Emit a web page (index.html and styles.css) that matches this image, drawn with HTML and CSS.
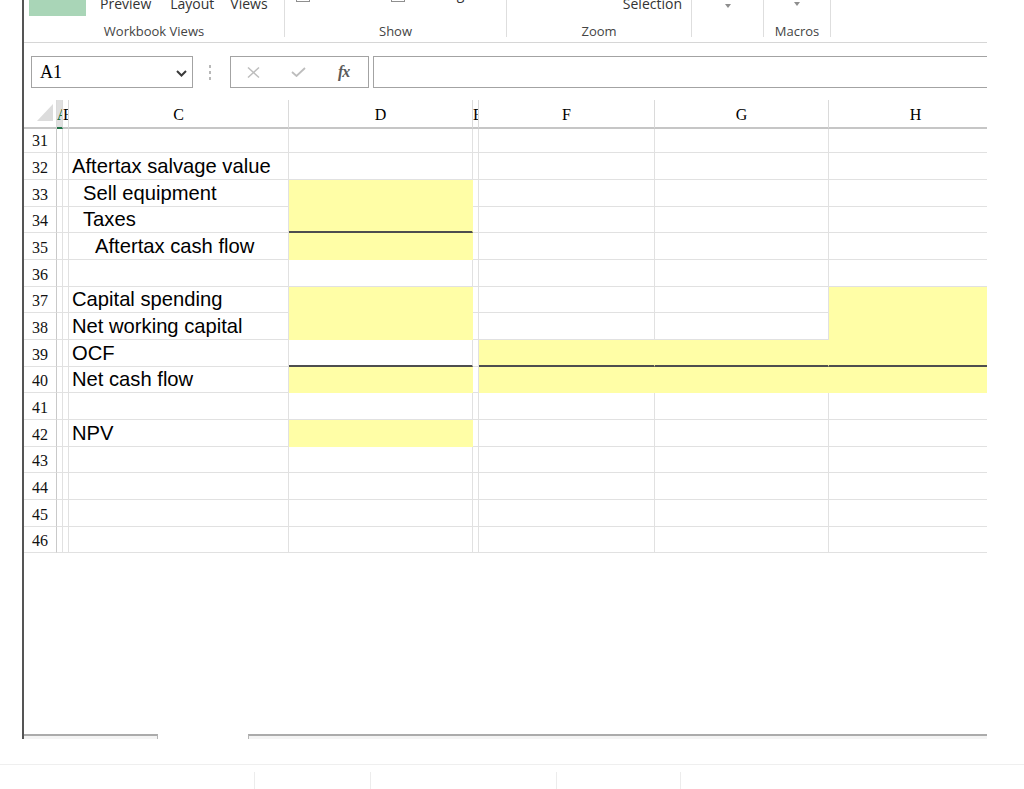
FILE: index.html
```html
<!DOCTYPE html>
<html>
<head>
    <title>Workbook - View</title>
    <link rel="stylesheet" href="styles.css">
</head>
<body>
<div class="frame">
    <div class="ribbon">
        <div class="group g-views">
            <div class="top">
                <span class="thumb"></span>
                <span class="cmd preview">Preview</span>
                <span class="cmd layout">Layout</span>
                <span class="cmd views">Views</span>
            </div>
            <div class="label">Workbook Views</div>
        </div>
        <div class="group g-show">
            <div class="top show-row">
                <span class="check first"></span>
                <span class="check-text">Gridlines</span>
                <span class="check second"></span>
                <span class="check-text">Headings</span>
            </div>
            <div class="label">Show</div>
        </div>
        <div class="group g-zoom">
            <div class="top zoom-row">
                <span class="cmd">Selection</span>
            </div>
            <div class="label">Zoom</div>
        </div>
        <div class="group g-window">
            <div class="drop"></div>
        </div>
        <div class="group g-macros">
            <div class="drop high"></div>
            <div class="label">Macros</div>
        </div>
    </div>

    <div class="formula">
        <div class="namebox">
            <span class="ref">A1</span>
            <svg class="chev" width="11" height="7" viewBox="0 0 11 7">
                <polyline points="1,1 5.5,5.5 10,1" fill="none" stroke="#3a3a3a" stroke-width="2"/>
            </svg>
        </div>
        <div class="dots"><span></span><span></span><span></span></div>
        <div class="fx-box">
            <svg class="cancel" width="13" height="11" viewBox="0 0 13 11">
                <line x1="1" y1="0.5" x2="12" y2="10.5" stroke="#bdbdbd" stroke-width="1.4"/>
                <line x1="12" y1="0.5" x2="1" y2="10.5" stroke="#bdbdbd" stroke-width="1.4"/>
            </svg>
            <svg class="enter" width="15" height="10" viewBox="0 0 15 10">
                <polyline points="1,5 5.5,9 14,1" fill="none" stroke="#bdbdbd" stroke-width="1.8"/>
            </svg>
            <span class="fx">fx</span>
        </div>
        <div class="input"></div>
    </div>

    <div class="sheet">
        <table class="grid">
            <colgroup>
                <col class="c-rh"><col class="c-n"><col class="c-n"><col class="c-c"><col class="c-d">
                <col class="c-n"><col class="c-f"><col class="c-g"><col class="c-h">
            </colgroup>
            <thead>
                <tr class="hdr">
                    <th class="corner">
                        <svg width="32" height="26" viewBox="0 0 32 26"><polygon points="29,3 29,20 13,20" fill="#dcdcdc"/></svg>
                    </th>
                    <th class="narrow sel">A</th>
                    <th class="narrow">B</th>
                    <th>C</th>
                    <th>D</th>
                    <th class="narrow">E</th>
                    <th>F</th>
                    <th>G</th>
                    <th>H</th>
                </tr>
            </thead>
            <tbody>
                <tr class="first"><th>31</th><td></td><td></td><td></td><td></td><td></td><td></td><td></td><td></td></tr>
                <tr><th>32</th><td></td><td></td><td class="txt">Aftertax salvage value</td><td></td><td></td><td></td><td></td><td></td></tr>
                <tr><th>33</th><td></td><td></td><td class="txt i1">Sell equipment</td><td class="y"></td><td></td><td></td><td></td><td></td></tr>
                <tr><th>34</th><td></td><td></td><td class="txt i1">Taxes</td><td class="y rule"></td><td></td><td></td><td></td><td></td></tr>
                <tr><th>35</th><td></td><td></td><td class="txt i2">Aftertax cash flow</td><td class="y"></td><td></td><td></td><td></td><td></td></tr>
                <tr><th>36</th><td></td><td></td><td></td><td></td><td></td><td></td><td></td><td></td></tr>
                <tr><th>37</th><td></td><td></td><td class="txt">Capital spending</td><td class="y"></td><td></td><td></td><td></td><td class="y"></td></tr>
                <tr><th>38</th><td></td><td></td><td class="txt">Net working capital</td><td class="y"></td><td></td><td></td><td></td><td class="y"></td></tr>
                <tr><th>39</th><td></td><td></td><td class="txt">OCF</td><td class="rule"></td><td></td><td class="y rule"></td><td class="y rule"></td><td class="y rule"></td></tr>
                <tr><th>40</th><td></td><td></td><td class="txt">Net cash flow</td><td class="y"></td><td></td><td class="y"></td><td class="y"></td><td class="y"></td></tr>
                <tr><th>41</th><td></td><td></td><td></td><td></td><td></td><td></td><td></td><td></td></tr>
                <tr><th>42</th><td></td><td></td><td class="txt">NPV</td><td class="y"></td><td></td><td></td><td></td><td></td></tr>
                <tr><th>43</th><td></td><td></td><td></td><td></td><td></td><td></td><td></td><td></td></tr>
                <tr><th>44</th><td></td><td></td><td></td><td></td><td></td><td></td><td></td><td></td></tr>
                <tr><th>45</th><td></td><td></td><td></td><td></td><td></td><td></td><td></td><td></td></tr>
                <tr><th>46</th><td></td><td></td><td></td><td></td><td></td><td></td><td></td><td></td></tr>
            </tbody>
        </table>
    </div>

    <div class="tabs">
        <div class="tab-a"></div>
        <div class="tab-b"></div>
    </div>
</div>

<div class="status">
    <div class="cells">
        <div class="cell s1"></div>
        <div class="cell s2"></div>
        <div class="cell s3"></div>
        <div class="cell s4"></div>
    </div>
</div>
</body>
</html>
```

FILE: styles.css
```css
body {
    margin: 0;
    height: 789px;
    overflow: hidden;
    background: #fff;
    font-family: "Open Sans", sans-serif;
}
.frame {
    margin-left: 22px;
    width: 963px;
    height: 739px;
    border-left: 2px solid #555;
    display: flex;
    flex-direction: column;
}

/* ribbon */
.ribbon {
    display: flex;
    align-items: flex-start;
    height: 42px;
    border-bottom: 1px solid #d6d6d6;
}
.group {
    height: 37px;
    box-sizing: border-box;
    border-right: 1px solid #dedede;
    display: flex;
    flex-direction: column;
}
.g-views { width: 261px; }
.g-show { width: 222px; }
.g-zoom { width: 185px; }
.g-window { width: 72px; }
.g-macros { width: 67px; }
.top {
    display: flex;
    height: 16px;
    font-size: 14px;
    color: #333;
}
.cmd {
    line-height: 16px;
    margin-top: -4.5px;
    white-space: nowrap;
}
.thumb {
    width: 57px;
    height: 16px;
    margin-left: 5px;
    background: #a9d5b7;
}
.preview { margin-left: 14px; }
.layout { margin-left: 19px; }
.views { margin-left: 16px; }
.label {
    margin-top: auto;
    margin-bottom: -1px;
    font-size: 13px;
    line-height: 14px;
    color: #444;
    text-align: center;
}
.show-row {
    margin-top: -14px;
}
.check {
    width: 14px;
    height: 14px;
    box-sizing: border-box;
    border: 1px solid #8f8f8f;
    background: #fff;
    margin-top: 2px;
}
.check.first { margin-left: 11px; }
.check.second { margin-left: 18px; }
.check-text {
    line-height: 16px;
    margin-left: 5px;
}
.zoom-row {
    justify-content: flex-end;
    padding-right: 9px;
}
.drop {
    width: 0;
    height: 0;
    border-left: 3.5px solid transparent;
    border-right: 3.5px solid transparent;
    border-top: 4px solid #8e8e8e;
    margin: 4px auto 0;
}
.drop.high { margin-top: 2px; }

/* formula bar */
.formula {
    display: flex;
    height: 32px;
    margin-top: 13px;
}
.namebox {
    width: 162px;
    margin-left: 7px;
    box-sizing: border-box;
    border: 1px solid #a3a3a3;
    display: flex;
    align-items: center;
    padding: 0 5px 0 8px;
    font-family: "Liberation Serif", serif;
    font-size: 18px;
    color: #000;
}
.namebox .ref { flex: 1; }
.chev { margin-top: 3px; }
.dots {
    margin-left: 15px;
    width: 4px;
    display: flex;
    flex-direction: column;
    align-items: center;
    justify-content: center;
    gap: 3px;
}
.dots span {
    width: 2px;
    height: 3px;
    background: #b8b8b8;
}
.fx-box {
    width: 139px;
    margin-left: 18px;
    box-sizing: border-box;
    border: 1px solid #a3a3a3;
    display: flex;
    align-items: center;
    padding-left: 16px;
}
.enter { margin-left: 31px; }
.fx {
    margin-left: 32px;
    font-family: "Liberation Serif", serif;
    font-style: italic;
    font-weight: bold;
    font-size: 16px;
    color: #5a5a5a;
    letter-spacing: -1px;
}
.input {
    flex: 1;
    margin-left: 4px;
    border: 1px solid #a3a3a3;
    border-right: none;
}

/* sheet */
.sheet {
    margin-top: 12px;
    overflow: hidden;
}
.grid {
    table-layout: fixed;
    border-collapse: separate;
    border-spacing: 0;
    width: 979px;
    font-family: "Liberation Sans", Arial, sans-serif;
}
.c-rh { width: 33px; }
.c-n { width: 6px; }
.c-c { width: 220px; }
.c-d { width: 184px; }
.c-f { width: 176px; }
.c-g { width: 174px; }
.c-h { width: 174px; }
.grid tr { height: 26.667px; }
.grid tr.hdr { height: 28.667px; }
.grid tr.first { height: 24.667px; }
.grid td, .grid th {
    padding: 0;
    border-right: 1px solid #e1e1e1;
    border-bottom: 1px solid #e1e1e1;
    overflow: hidden;
    white-space: nowrap;
    vertical-align: bottom;
}
.grid thead th {
    font-family: "Liberation Serif", serif;
    font-weight: normal;
    font-size: 16px;
    line-height: 24px;
    color: #000;
    border-bottom: 2px solid #c6c6c6;
    border-right-color: #dadada;
}
.grid thead th.corner svg { display: block; }
.grid thead th.narrow { text-align: left; }
.grid thead th.sel {
    background: #dfdfdf;
    color: #1e7145;
    font-weight: bold;
    border-bottom-color: #1e7145;
}
.grid tbody th {
    font-family: "Liberation Serif", serif;
    font-weight: normal;
    font-size: 16px;
    line-height: 22px;
    color: #111;
    border-right-color: #c9c9c9;
}
.grid td.txt {
    font-size: 20.2px;
    line-height: 25px;
    color: #000;
    padding-left: 3px;
}
.grid td.i1 { padding-left: 14px; }
.grid td.i2 { padding-left: 26px; }
.grid td.y {
    background: #fffea6;
    border-right-color: #fffea6;
    border-bottom-color: #fffea6;
}
.grid td.rule {
    border-bottom: 2px solid #4e4e4e;
}

/* sheet tabs */
.tabs {
    margin-top: auto;
    height: 5px;
    display: flex;
}
.tab-a, .tab-b {
    box-sizing: border-box;
    border-top: 2px solid #ababab;
    background: #f4f4f4;
}
.tab-a {
    width: 134px;
    border-right: 1px solid #b5b5b5;
}
.tab-b {
    flex: 1;
    margin-left: 90px;
    border-left: 1px solid #b5b5b5;
}

/* status bar */
.status {
    margin-top: 25px;
    border-top: 1px solid #efefef;
}
.cells {
    display: flex;
    margin-top: 7px;
    height: 17px;
}
.cell {
    box-sizing: border-box;
    border-right: 1px solid #ececec;
}
.s1 { width: 255px; }
.s2 { width: 116px; }
.s3 { width: 186px; }
.s4 { width: 124px; }
```
